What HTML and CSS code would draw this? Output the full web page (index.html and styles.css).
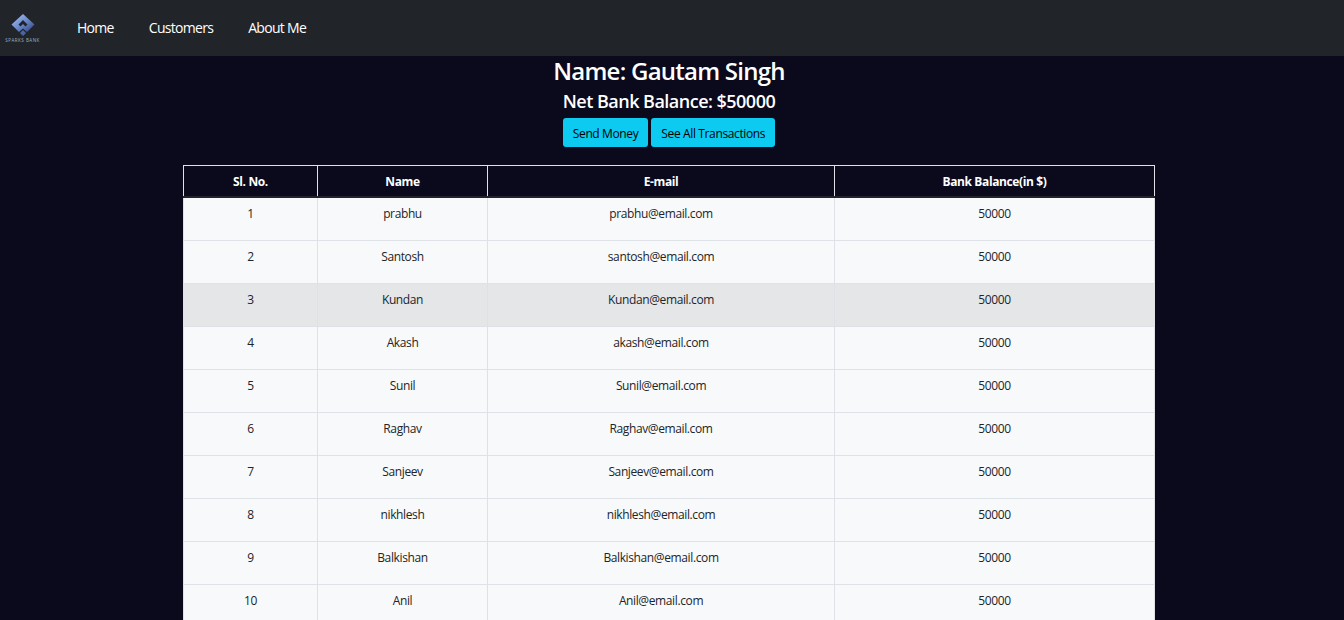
FILE: index.html
```html
<!DOCTYPE html>
<html lang="en">
<head>
  <meta charset="UTF-8">
  <title>Sparks Bank</title>
  <link rel="stylesheet" href="styles.css">
</head>
<body>
  <nav class="navbar">
    <a class="brand" href="#">
      <svg class="brand-icon" width="24" height="22" viewBox="0 0 24 22">
        <defs>
          <linearGradient id="logoFill" x1="0" y1="0" x2="1" y2="1">
            <stop offset="0" stop-color="#b4c8ee"/>
            <stop offset="0.5" stop-color="#6a8bd0"/>
            <stop offset="1" stop-color="#2f3f78"/>
          </linearGradient>
        </defs>
        <path fill="url(#logoFill)" fill-rule="evenodd" d="M12 0 L23.5 10.5 L16 18 L12 14.5 L8 18 L0.5 10.5 Z M12 6 L7.5 10.5 L9.5 12.5 L12 10 L14.5 12.5 L16.5 10.5 Z"/>
        <path fill="#4a64a4" d="M12 16 L15 19 L12 22 L9 19 Z"/>
      </svg>
      <span class="brand-text">SPARKS BANK</span>
    </a>
    <ul class="nav-links">
      <li><a href="#">Home</a></li>
      <li><a href="#">Customers</a></li>
      <li><a href="#">About Me</a></li>
    </ul>
  </nav>

  <main class="content">
    <h1 class="user-name">Name: Gautam Singh</h1>
    <h2 class="user-balance">Net Bank Balance: $50000</h2>
    <div class="actions">
      <button class="btn">Send Money</button>
      <button class="btn">See All Transactions</button>
    </div>

    <table class="customers">
      <thead>
        <tr>
          <th class="col-no">Sl. No.</th>
          <th class="col-name">Name</th>
          <th class="col-email">E-mail</th>
          <th class="col-balance">Bank Balance(in $)</th>
        </tr>
      </thead>
      <tbody>
        <tr><td>1</td><td>prabhu</td><td>prabhu@email.com</td><td>50000</td></tr>
        <tr><td>2</td><td>Santosh</td><td>santosh@email.com</td><td>50000</td></tr>
        <tr class="hovered"><td>3</td><td>Kundan</td><td>Kundan@email.com</td><td>50000</td></tr>
        <tr><td>4</td><td>Akash</td><td>akash@email.com</td><td>50000</td></tr>
        <tr><td>5</td><td>Sunil</td><td>Sunil@email.com</td><td>50000</td></tr>
        <tr><td>6</td><td>Raghav</td><td>Raghav@email.com</td><td>50000</td></tr>
        <tr><td>7</td><td>Sanjeev</td><td>Sanjeev@email.com</td><td>50000</td></tr>
        <tr><td>8</td><td>nikhlesh</td><td>nikhlesh@email.com</td><td>50000</td></tr>
        <tr><td>9</td><td>Balkishan</td><td>Balkishan@email.com</td><td>50000</td></tr>
        <tr><td>10</td><td>Anil</td><td>Anil@email.com</td><td>50000</td></tr>
      </tbody>
    </table>
  </main>
</body>
</html>
```

FILE: styles.css
```css
html, body {
  height: 620px;
  overflow: hidden;
}

body {
  margin: 0;
  font-family: 'Open Sans', 'Noto Sans', sans-serif;
  background-color: #0a0a1c;
  color: #fff;
}

.navbar {
  display: flex;
  align-items: center;
  height: 56px;
  background-color: #212529;
}

.brand {
  display: flex;
  flex-direction: column;
  align-items: center;
  width: 37px;
  margin-left: 4px;
  text-decoration: none;
}

.brand-icon {
  display: block;
  margin-top: 1px;
}

.brand-text {
  font-size: 4.5px;
  line-height: 5px;
  margin-top: 2px;
  letter-spacing: 0.5px;
  white-space: nowrap;
  color: #a7b0bf;
}

.nav-links {
  display: flex;
  gap: 35px;
  margin: -2px 0 0 36px;
  padding: 0;
  list-style: none;
}

.nav-links a {
  font-size: 14px;
  letter-spacing: -0.7px;
  color: #fff;
  text-decoration: none;
}

.content {
  display: flex;
  flex-direction: column;
  align-items: center;
  padding-right: 6px;
}

.user-name {
  margin: -1px 0 0;
  font-size: 24px;
  line-height: 32px;
  font-weight: 600;
  letter-spacing: -0.75px;
}

.user-balance {
  margin: 2px 0 0;
  font-size: 18px;
  line-height: 24px;
  font-weight: 600;
  letter-spacing: -0.52px;
}

.actions {
  display: flex;
  gap: 3px;
  margin-top: 5px;
}

.btn {
  height: 29px;
  padding: 1px 10px 0;
  border: none;
  border-radius: 3px;
  background-color: #0dcaf0;
  color: #000;
  font-family: inherit;
  font-size: 12px;
  letter-spacing: -0.37px;
}

.customers {
  width: 972px;
  margin-top: 18px;
  border-collapse: collapse;
  table-layout: fixed;
  font-size: 12px;
  letter-spacing: -0.38px;
  text-align: center;
  color: #212529;
}

.customers th {
  height: 30px;
  padding: 0;
  border: 1px solid #dee2e6;
  border-bottom: 2px solid #212529;
  background-color: #0a0a1c;
  color: #fff;
  font-size: 12px;
  font-weight: 700;
}

.col-no { width: 133px; }
.col-name { width: 169px; }
.col-email { width: 346px; }

.customers td {
  height: 34px;
  padding: 8px 0 0;
  border: 1px solid #dee2e6;
  background-color: #f8f9fa;
  vertical-align: top;
  line-height: 16px;
}

.customers tr.hovered td {
  background-color: #e5e6e7;
}
```
